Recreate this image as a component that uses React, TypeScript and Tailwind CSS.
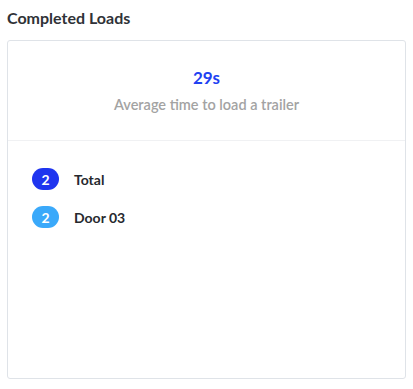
import React from "react";

const rows = [
  { count: 2, label: "Total", color: "bg-[#1f35ef]" },
  { count: 2, label: "Door 03", color: "bg-[#3aa9fa]" },
];

const App: React.FC = () => {
  return (
    <div
      className="w-[413px] h-[389px] bg-white px-[7px] pt-[7px]"
      style={{ fontFamily: "Lato, 'Open Sans', sans-serif" }}
    >
      <h2 className="text-[16px] leading-[22px] font-bold text-[#2f3237]">
        Completed Loads
      </h2>
      <div className="mt-[11px] w-[399px] h-[339px] border border-[#dfe3e8] rounded-[3px] flex flex-col">
        <div className="h-[100px] flex flex-col items-center pt-[26px] border-b border-[#f0f1f3]">
          <div className="text-[17px] leading-[22px] font-bold text-[#2141f2]">
            29s
          </div>
          <div className="mt-[7px] text-[14.5px] leading-[18px] font-semibold text-[#a3a3a3]">
            Average time to load a trailer
          </div>
        </div>
        <div className="flex flex-col gap-[16px] pt-[27px] pl-[24px]">
          {rows.map((r) => (
            <div key={r.label} className="flex items-center gap-[15px]">
              <span
                className={`${r.color} w-[27px] h-[22px] rounded-full flex items-center justify-center text-white text-[14px] font-bold`}
              >
                {r.count}
              </span>
              <span className="text-[14px] font-bold text-[#26292e]">
                {r.label}
              </span>
            </div>
          ))}
        </div>
      </div>
    </div>
  );
};

export default App;
